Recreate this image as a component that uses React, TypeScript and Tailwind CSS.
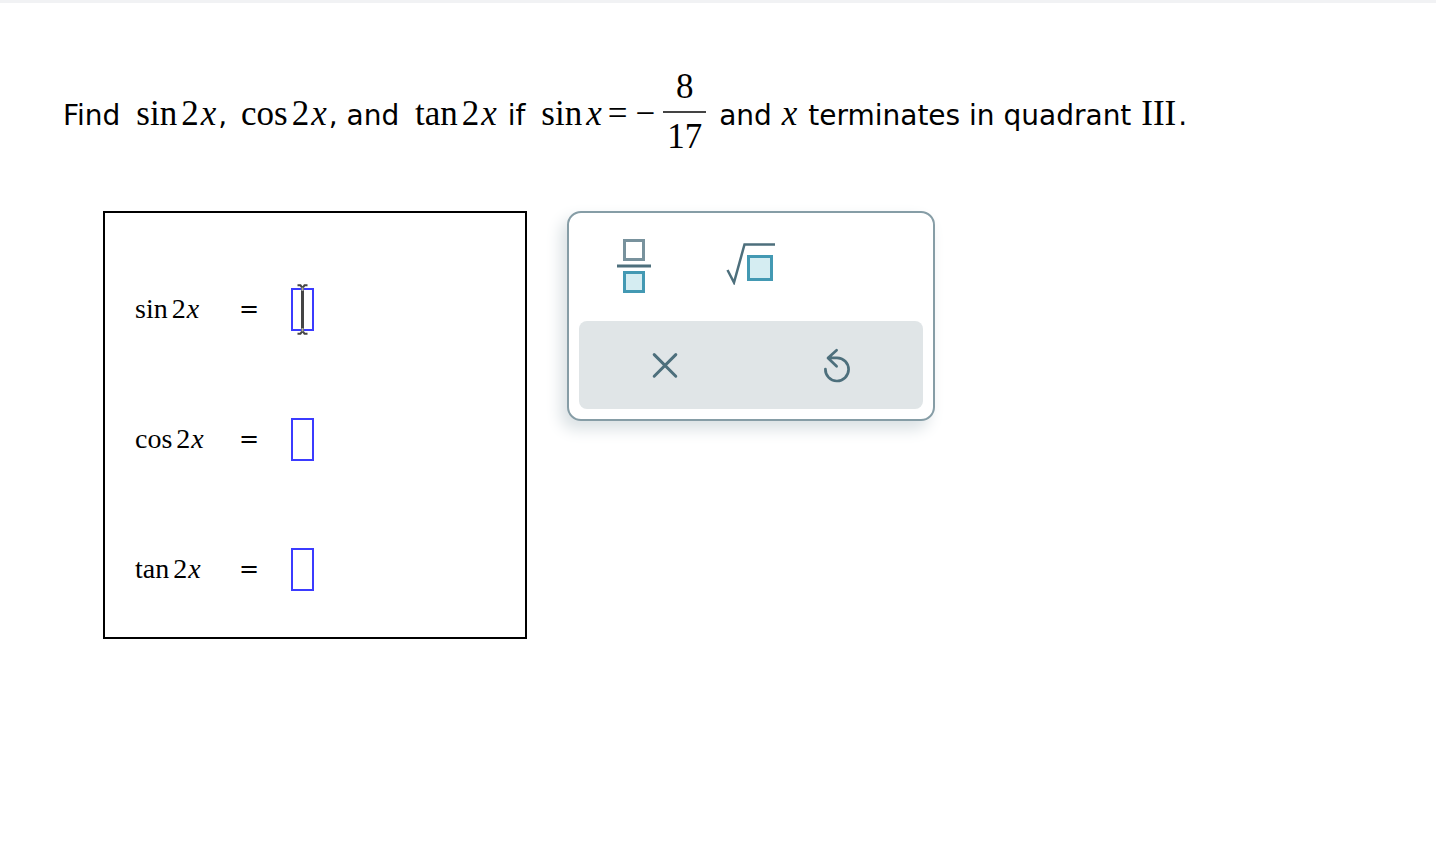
import { useState } from "react";
import type { ReactNode } from "react";

const FUNCTIONS = ["sin", "cos", "tan"] as const;

type FnName = (typeof FUNCTIONS)[number];

const EMPTY: Record<FnName, string> = { sin: "", cos: "", tan: "" };

export default function App() {
  const [answers, setAnswers] = useState(EMPTY);
  const [active, setActive] = useState<FnName>("sin");

  const insert = (text: string) =>
    setAnswers((prev) => ({ ...prev, [active]: prev[active] + text }));

  return (
    <main className="min-h-screen border-t-[3px] border-[#f1f2f4] bg-white text-black">
      <p className="px-[63px] pt-16 font-['DejaVu_Sans',sans-serif] text-[28px] leading-10">
        Find{" "}
        <MathText className="ml-1.5">
          sin<span className="ml-1">2</span>
          <i className="ml-0.5">x</i>
        </MathText>
        ,{" "}
        <MathText className="ml-1">
          cos<span className="ml-1">2</span>
          <i className="ml-0.5">x</i>
        </MathText>
        , and{" "}
        <MathText className="ml-1.5">
          tan<span className="ml-1">2</span>
          <i className="ml-0.5">x</i>
        </MathText>{" "}
        if{" "}
        <MathText className="ml-1.5">
          sin<i className="ml-1">x</i>
          <span className="ml-1.5">=</span>
          <span className="ml-2">−</span>
        </MathText>
        <Fraction top="8" bottom="17" /> and{" "}
        <MathText>
          <i>x</i>
        </MathText>{" "}
        terminates in quadrant <MathText>III</MathText>.
      </p>

      <div className="flex flex-wrap items-start gap-10 px-[103px] pt-11">
        <form
          className="w-full max-w-[424px] border-2 border-black px-[30px] pt-[31px] pb-[3px]"
          onSubmit={(e) => e.preventDefault()}
        >
          {FUNCTIONS.map((fn) => (
            <div key={fn} className="flex h-[130px] items-center">
              <label
                htmlFor={fn}
                className="flex w-[156px] items-center font-['Liberation_Serif',serif] text-[28px] leading-8"
              >
                <span className="w-26">
                  {fn}
                  <span className="ml-1">2</span>
                  <i className="ml-px">x</i>
                </span>
                <span className="font-['DejaVu_Sans',sans-serif] text-[24px]">
                  =
                </span>
              </label>
              <div className="relative">
                <input
                  id={fn}
                  value={answers[fn]}
                  onFocus={() => setActive(fn)}
                  onChange={(e) =>
                    setAnswers({ ...answers, [fn]: e.target.value })
                  }
                  className="block h-[43px] min-w-[23px] field-sizing-content border-2 border-[#3b3bff] text-center font-['Liberation_Serif',serif] text-[24px] outline-none"
                />
                {active === fn && answers[fn] === "" && <TextCursor />}
              </div>
            </div>
          ))}
        </form>

        <section
          aria-label="Math palette"
          className="w-full max-w-[368px] rounded-[14px] border-2 border-[#869da6] bg-white shadow-[-6px_8px_16px_#d9e0e3]"
        >
          <div className="grid h-[108px] grid-cols-3 px-[7px] pb-0.5">
            <button
              type="button"
              aria-label="Fraction"
              className="flex items-center justify-center"
              onClick={() => insert("/")}
            >
              <FractionIcon />
            </button>
            <button
              type="button"
              aria-label="Square root"
              className="flex items-center justify-center pb-2"
              onClick={() => insert("√")}
            >
              <RootIcon />
            </button>
          </div>
          <div className="mx-2.5 mb-2.5 grid h-[88px] grid-cols-2 rounded-lg bg-[#e0e5e7]">
            <button
              type="button"
              aria-label="Clear"
              className="flex items-center justify-center"
              onClick={() => setAnswers({ ...answers, [active]: "" })}
            >
              <svg width="28" height="28" viewBox="0 0 28 28" fill="none">
                <path
                  d="M3.2 3.6 24.8 25.2M24.8 3.6 3.2 25.2"
                  stroke="#4d6f7c"
                  strokeWidth="3"
                  strokeLinecap="round"
                />
              </svg>
            </button>
            <button
              type="button"
              aria-label="Start over"
              className="flex items-center justify-center"
              onClick={() => setAnswers(EMPTY)}
            >
              <svg width="28" height="36" viewBox="0 0 28 36" fill="none">
                <path
                  d="M2.4 22A11.6 11.6 0 1 0 14 10.8H5.2M13.6 3.2 5 11 13.6 19.2"
                  stroke="#4d6f7c"
                  strokeWidth="2.7"
                  strokeLinecap="round"
                  strokeLinejoin="round"
                />
              </svg>
            </button>
          </div>
        </section>
      </div>
    </main>
  );
}

function MathText({
  children,
  className = "",
}: {
  children: ReactNode;
  className?: string;
}) {
  return (
    <span
      className={`pr-0.5 pl-px font-['Liberation_Serif',serif] text-[35px] whitespace-nowrap ${className}`}
    >
      {children}
    </span>
  );
}

function Fraction({ top, bottom }: { top: string; bottom: string }) {
  return (
    <span className="mr-1 ml-1.5 inline-flex flex-col pb-2.5 text-center align-middle font-['Liberation_Serif',serif] text-[35px] leading-10">
      <span className="border-b-2 border-[#444] px-1 pb-1">{top}</span>
      <span className="px-1 pt-1">{bottom}</span>
    </span>
  );
}

// I-beam shown over the empty active field
function TextCursor() {
  return (
    <svg
      className="pointer-events-none absolute -top-1 left-1.5"
      width="11"
      height="51"
      viewBox="0 0 11 51"
      fill="none"
      stroke="#444"
    >
      <path d="M5.5 4V47" strokeWidth="3" />
      <path
        d="M.5 1.3H3.5L5.5 4 7.5 1.3H10.5M.5 49.7H3.5L5.5 47 7.5 49.7H10.5"
        strokeWidth="2"
      />
      <path d="M5.5 3.5V7M5.5 44V47.5" stroke="#aaa" strokeWidth="2" />
    </svg>
  );
}

function FractionIcon() {
  return (
    <svg width="34" height="54" viewBox="0 0 34 54" fill="none">
      <rect x="7.5" y="1.5" width="19" height="19" stroke="#78929d" strokeWidth="3" />
      <path d="M0 27H34" stroke="#4d6f7c" strokeWidth="3" />
      <rect
        x="7.5"
        y="33.5"
        width="19"
        height="19"
        fill="#d5edf2"
        stroke="#4399b3"
        strokeWidth="3"
      />
    </svg>
  );
}

function RootIcon() {
  return (
    <svg width="50" height="46" viewBox="0 0 50 46" fill="none">
      <path
        d="M1.5 31 8 43.5 18.5 5.5H49"
        stroke="#4d6f7c"
        strokeWidth="2.5"
      />
      <rect
        x="22.5"
        y="17.5"
        width="23"
        height="23"
        fill="#d5edf2"
        stroke="#4399b3"
        strokeWidth="3"
      />
    </svg>
  );
}
